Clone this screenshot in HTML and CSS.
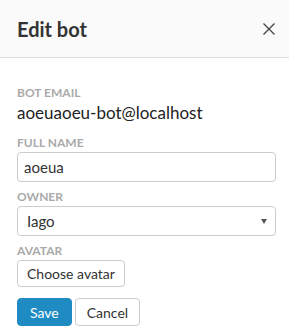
FILE: index.html
```html
<!DOCTYPE html>
<html>
<head>
<meta charset="utf-8">
<link rel="stylesheet" href="styles.css">
</head>
<body>
<div class="modal">
  <div class="header">
    <h1 class="title">Edit bot</h1>
    <button class="close" aria-label="Close">
      <svg width="12" height="12" viewBox="0 0 12 12"><path d="M0.5 0.5 L11.5 11.5 M11.5 0.5 L0.5 11.5" stroke="#444" stroke-width="1.3" fill="none"/></svg>
    </button>
  </div>
  <div class="body">
    <div class="field">
      <div class="label">Bot email</div>
      <div class="value">aoeuaoeu-bot@localhost</div>
    </div>
    <div class="field">
      <label class="label">Full name</label>
      <input class="input" type="text" value="aoeua">
    </div>
    <div class="field">
      <label class="label">Owner</label>
      <div class="select-wrap">
        <select class="select"><option>Iago</option></select>
        <span class="arrow"></span>
      </div>
    </div>
    <div class="field field-avatar">
      <label class="label">Avatar</label>
      <button class="btn btn-avatar">Choose avatar</button>
    </div>
    <div class="actions">
      <button class="btn btn-primary">Save</button>
      <button class="btn">Cancel</button>
    </div>
  </div>
</div>
</body>
</html>
```
FILE: styles.css
```css
* { box-sizing: border-box; }
html, body { margin: 0; padding: 0; background: #fff; }
body { font-family: "Lato", "Liberation Sans", sans-serif; color: #333; width: 289px; }
.header {
  height: 58px;
  background: #fafafa;
  border-bottom: 1px solid #ddd;
  display: flex;
  align-items: center;
  justify-content: space-between;
  padding: 0 14px 0 17px;
}
.title { margin: 0; font-size: 20px; font-weight: 700; color: #333; line-height: 24px; }
.close { border: 0; background: none; padding: 0; width: 12px; height: 12px; display: block; }
.close svg { display: block; }
.body { padding: 28px 13px 0 17px; }
.field { margin-bottom: 8px; }
.field-avatar { margin-bottom: 0; }
.label {
  display: block;
  font-size: 12px;
  line-height: 14px;
  font-weight: 700;
  color: #aaa;
  text-transform: uppercase;
  margin-bottom: 2px;
}
.value { font-size: 17px; line-height: 22px; color: #222; margin-bottom: 12px; }
.input, .select {
  display: block;
  width: 100%;
  height: 30px;
  border: 1px solid #ccc;
  border-radius: 4px;
  font-family: inherit;
  font-size: 15px;
  color: #333;
  background: #fff;
  padding: 0 6px;
  margin: 0;
}
.select-wrap { position: relative; }
.select { appearance: none; -webkit-appearance: none; padding-left: 9px; }
.arrow {
  position: absolute;
  right: 9px;
  top: 13px;
  width: 0; height: 0;
  border-left: 3px solid transparent;
  border-right: 3px solid transparent;
  border-top: 5px solid #555;
}
.btn {
  font-family: inherit;
  font-size: 14px;
  color: #333;
  background: #fff;
  border: 1px solid #ccc;
  border-radius: 4px;
  height: 27px;
  padding: 0 11px;
  margin: 0;
}
.btn-avatar { display: block; padding: 0 9px; margin-top: 2px; }
.actions { display: flex; gap: 3px; margin-top: 11px; }
.actions .btn { height: 28px; padding: 0 11px; }
.actions .btn-primary { padding: 0 12px; }
.btn-primary { background: #1e8bc3; border-color: #1e8bc3; color: #fff; }
```
